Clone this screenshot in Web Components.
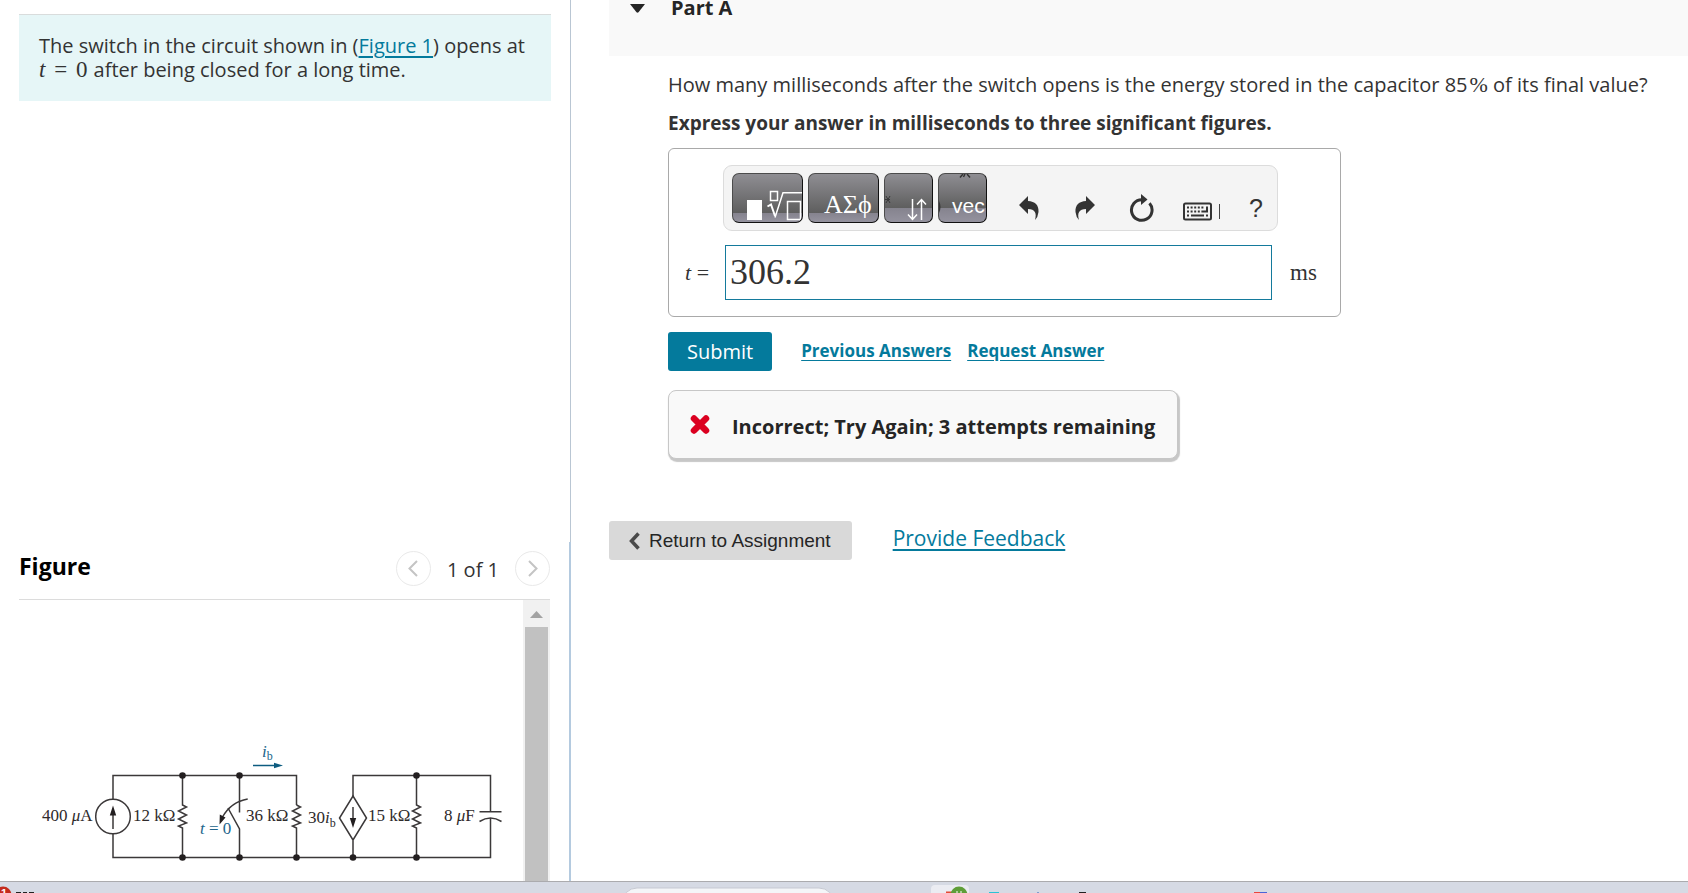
<!DOCTYPE html>
<html lang="en">
<head>
<meta charset="utf-8">
<title>Part A</title>
<style>
  body {
    margin: 0;
    background: #fff;
    color: #333;
    font: 20px/24px "Open Sans", "Noto Sans", sans-serif;
    --link: #047a9c;
    --ink: #252525;
    --math: "Liberation Serif", serif;
  }
</style>
</head>
<body>
<app-shell>
  <problem-card slot="problem">The switch in the circuit shown in (<a href="#figure">Figure 1</a>) opens at <math-text><i>t</i> <b>=</b> 0</math-text> after being closed for a long time.</problem-card>
  <figure-panel slot="figure" id="figure"><circuit-diagram></circuit-diagram></figure-panel>
  <part-header slot="main">Part A</part-header>
  <question-part slot="main">
    <p slot="prompt">How many milliseconds after the switch opens is the energy stored in the capacitor 85<percent-sign></percent-sign> of its final value?</p>
    <span slot="hint">Express your answer in milliseconds to three significant figures.</span>
    <answer-editor slot="answer" value="306.2"></answer-editor>
    <result-box slot="result">Incorrect; Try Again; 3 attempts remaining</result-box>
  </question-part>
  <page-links slot="main"></page-links>
  <task-bar slot="taskbar"></task-bar>
</app-shell>

<script>
const define = (name, html, setup) => {
  const template = document.createElement('template');
  template.innerHTML = html.trim();
  customElements.define(name, class extends HTMLElement {
    constructor() {
      super();
      this.attachShadow({ mode: 'open' }).append(template.content.cloneNode(true));
    }
    connectedCallback() { if (setup) setup(this, this.shadowRoot); }
  });
};

define('app-shell', `
<style>
  :host { display: grid; grid-template: minmax(0, 1fr) 12px / minmax(420px, 571px) minmax(0, 1fr); height: 100vh; overflow: hidden; }
  .side { display: flex; flex-direction: column; min-height: 0; }
  .top { flex: 1; box-sizing: border-box; padding: 14px 19px 0; border-right: 1px solid #b9c6d3; }
  main { padding-left: 38px; min-height: 0; overflow: hidden; }
  .bar { grid-column: 1 / -1; }
</style>
<div class="side"><div class="top"><slot name="problem"></slot></div><slot name="figure"></slot></div>
<main><slot name="main"></slot></main>
<div class="bar"><slot name="taskbar"></slot></div>`);

define('problem-card', `
<style>
  :host { display: block; padding: 19px 20px; background: #e6f6f7; border-top: 1px solid #d9dcdc; }
  ::slotted(a) { color: var(--link); text-decoration: underline; text-underline-offset: 3px; }
</style>
<slot></slot>`);

define('math-text', `
<style>
  :host { font: 23px/20px var(--math); margin-right: 1px; }
  ::slotted(b) { font-weight: 400; margin: 0 3px; }
</style><slot></slot>`);

define('percent-sign', `
<style>:host { font: 22px/20px var(--math); padding-left: 2px; }</style>%`);

define('figure-panel', `
<style>
  :host { display: flex; flex-direction: column; flex: 0 0 339px; box-sizing: border-box; padding: 0 19px; border-right: 2px solid #b4cadf; }
  header { display: flex; align-items: center; justify-content: space-between; box-sizing: border-box; height: 58px; padding-bottom: 5px; border-bottom: 1px solid #dcdcdc; }
  h2 { margin: 0; padding-bottom: 4px; font-size: 23px; line-height: 32px; color: #000; }
  nav { display: flex; align-items: center; gap: 16px; }
  button { width: 35px; height: 35px; padding: 0; border: 1px solid #e9e9e9; border-radius: 50%; background: #fff; display: grid; place-items: center; }
  nav span { padding-top: 3px; }
  .view { flex: 1; min-height: 0; display: flex; justify-content: space-between; overflow: hidden; }
  .track { flex: 0 0 27px; box-sizing: border-box; background: #f1f1f1; padding: 11px 2px 0; display: flex; flex-direction: column; align-items: center; gap: 9px; }
  .thumb { flex: 1; align-self: stretch; background: #c1c1c1; }
</style>
<header>
  <h2>Figure</h2>
  <nav aria-label="Figure pages">
    <button type="button" aria-label="Previous figure"><svg width="10" height="17" fill="none" stroke="#c4c4c4" stroke-width="2"><path d="M9 1 1.500 8.500 9 16"/></svg></button>
    <span>1 of 1</span>
    <button type="button" aria-label="Next figure"><svg width="10" height="17" fill="none" stroke="#c4c4c4" stroke-width="2"><path d="M1 1 8.500 8.500 1 16"/></svg></button>
  </nav>
</header>
<div class="view">
  <slot></slot>
  <div class="track" aria-hidden="true">
    <svg width="13" height="7"><path d="M0 7 6.500 0 13 7z" fill="#a3a3a3"/></svg>
    <div class="thumb"></div>
  </div>
</div>`);

define('circuit-diagram', `
<style>
  :host { display: block; }
  svg { display: block; }
  text { font: 17px "Liberation Serif", serif; fill: #2e2a2b; white-space: pre; }
  .i { font-style: italic; }
  .sub { font-size: 12px; }
  .blue { fill: #22658c; }
</style>
<svg width="504" height="281" role="img" aria-label="Circuit diagram">
  <g fill="none" stroke="#3b3839" stroke-width="1.500">
    <path d="M94 199V175.500H277.500V205M94 234V257.500H471.500V218M334 196V175.500H471.500V212"/>
    <circle cx="94" cy="216.500" r="17.300"/>
    <path d="M334 196 347.500 218 334 240 320.500 218zM334 240V257.500"/>
    <path d="M163.500 175.500V205l4 2-8 4 8 4-8 4 8 4-8 3 4 2V257.500"/>
    <path d="M277.500 205l4 2-8 4 8 4-8 4 8 4-8 3 4 2V257.500"/>
    <path d="M397.500 175.500V205l4 2-8 4 8 4-8 4 8 4-8 3 4 2V257.500"/>
    <path d="M220.500 175.500V212.500M220.500 257.500V229L209 208"/>
    <path d="M228.700 199Q212 202 203.500 217"/>
    <path d="M460.500 211.700H482.500M460.500 221.500Q471.500 214.500 482.500 221.500"/>
    <path d="M94 229V210M334 207V222"/>
  </g>
  <g fill="#231f20">
    <path d="M94 205.500 97.200 215.500H90.800zM334 228 330.800 218H337.200zM200.500 224.500 200.800 214.500 206.500 217.500z"/>
    <circle cx="163.500" cy="175.500" r="3.300"/><circle cx="220.500" cy="175.500" r="3.300"/><circle cx="397.500" cy="175.500" r="3.300"/>
    <circle cx="163.500" cy="257.500" r="3.300"/><circle cx="220.500" cy="257.500" r="3.300"/><circle cx="277.500" cy="257.500" r="3.300"/>
    <circle cx="334" cy="257.500" r="3.300"/><circle cx="397.500" cy="257.500" r="3.300"/>
  </g>
  <path d="M234 165.500H256" stroke="#0d5c80" stroke-width="1.500"/><path d="M255 162.800 264 165.500 255 168.200z" fill="#0d5c80"/>
  <text x="23" y="221">400 <tspan class="i">μ</tspan>A</text>
  <text x="114" y="221">12 kΩ</text>
  <text x="227" y="221">36 kΩ</text>
  <text x="289" y="223">30<tspan class="i">i</tspan><tspan class="sub" dy="4">b</tspan></text>
  <text x="349" y="221">15 kΩ</text>
  <text x="425" y="221">8 <tspan class="i">μ</tspan>F</text>
  <text x="181" y="234" class="blue"><tspan class="i">t</tspan> = 0</text>
  <text x="243" y="157" class="blue"><tspan class="i">i</tspan><tspan class="sub" dy="3">b</tspan></text>
</svg>`);

define('part-header', `
<style>
  :host { display: block; margin-top: -4px; background: #f9f9f9; padding: 0 21px 36px; }
  h1 { display: flex; align-items: center; gap: 26px; margin: 0; font-size: 20px; line-height: 24px; color: var(--ink); }
</style>
<h1><svg width="15" height="9" aria-hidden="true"><path d="M0 0H15L8.500 8.300Q7.500 9 6.500 8.300z" fill="#252525"/></svg><slot></slot></h1>`);

define('question-part', `
<style>
  :host { display: block; padding: 17px 16px 0 59px; }
  ::slotted(p) { margin: 0 0 14px; }
  .hint { margin: 0 0 13px; font-size: 19px; font-weight: 700; }
  .row { display: flex; align-items: flex-start; margin: 15px 0 19px; }
  button { height: 39px; padding: 0 19px; border: 0; border-radius: 3px; background: #047a9c; color: #fff; font: inherit; }
  a { padding-top: 7px; font-size: 17px; font-weight: 700; color: var(--link); text-underline-offset: 3px; }
  .prev { margin: 0 16px 0 29px; }
</style>
<slot name="prompt"></slot>
<p class="hint"><slot name="hint"></slot></p>
<slot name="answer"></slot>
<div class="row">
  <button type="submit">Submit</button>
  <a class="prev" href="#previous">Previous Answers</a>
  <a href="#request">Request Answer</a>
</div>
<slot name="result"></slot>`);

define('answer-editor', `
<style>
  :host { display: grid; grid-template-columns: 54px minmax(0, 1fr) 62px; row-gap: 14px; align-items: center; box-sizing: border-box; max-width: 673px; padding: 16px 0; border: 1px solid #a9a9a9; border-radius: 6px; }
  editor-toolbar { grid-column: 2; }
  label { grid-column: 1; padding-left: 16px; font: 22px/24px var(--math); }
  input { height: 55px; min-width: 0; box-sizing: border-box; margin: 0 6px 0 2px; padding: 0 4px 2px; border: 1px solid #147a9c; border-radius: 0; background: #fff; color: #333; font: 36px var(--math); }
  .unit { padding-left: 12px; font: 23px/24px var(--math); }
</style>
<editor-toolbar></editor-toolbar>
<label for="value"><i>t</i> =</label>
<input id="value" type="text">
<span class="unit">ms</span>`, (host, root) => {
  root.querySelector('input').value = host.getAttribute('value') || '';
});

define('editor-toolbar', `
<style>
  :host { display: flex; align-items: flex-start; box-sizing: border-box; height: 66px; padding: 7px 0 0 8px; border: 1px solid #dcdcdc; border-radius: 9px; background: #f4f4f4; }
  button { padding: 0; border: 0; background: none; color: #333; font: inherit; }
  .keys { display: flex; gap: 5px; }
  .key { box-sizing: border-box; width: 71px; height: 50px; border: 1px solid; border-color: #4c4c4c #111 #111 #4c4c4c; border-radius: 7px; overflow: hidden; background: linear-gradient(#8f8e93, #5e5e5e 39px, #85838e 39px, #94929e); color: #fff; }
  .key.small { width: 49px; background: linear-gradient(#8f8e93, #5e5e5e 34px, #85838e 34px, #94929e); }
  svg { display: block; }
  .greek { font: 26px "Liberation Serif", serif; fill: #fff; }
  .vec { font: 21px "Liberation Sans", sans-serif; fill: #fff; }
  .tools { display: flex; gap: 28px; align-items: center; padding: 21px 0 0 28px; }
  .tools button { flex: none; display: flex; justify-content: center; min-width: 28px; }
  .tools .help { min-width: 14px; font: 25px/28px "Liberation Sans", sans-serif; }
  .tools .kbd { align-items: center; gap: 7px; padding-top: 6px; }
</style>
<div class="keys">
  <button class="key" type="button" aria-label="Templates"><svg width="69" height="48" fill="none" stroke="#fff"><path d="M14 26h15v20H14z" fill="#fff" stroke="none"/><path d="M37.500 17.500h7v9h-7z" stroke-width="1.500"/><path d="M34.500 32.500 38 30.500 42 42" stroke-width="2"/><path d="M42 43.500 50 18.700H69" stroke-width="1.500"/><path d="M54.500 27.500h13v18h-13z" stroke-width="1.500"/></svg></button>
  <button class="key" type="button" aria-label="Symbols"><svg width="69" height="48"><text class="greek" x="15" y="39">ΑΣϕ</text></svg></button>
  <button class="key small" type="button" aria-label="Subscripts and superscripts"><svg width="47" height="48" fill="none" stroke="#fff" stroke-width="1.500"><path d="M27.500 25V45M23 40.500 27.500 45.500 32 40.500M36.500 46V26M32 30.500 36.500 25.500 41 30.500"/><path d="M1 22 5 29M5 22 1 29M0 25.500H5" stroke="#38383a" stroke-width="1"/></svg></button>
  <button class="key small" type="button" aria-label="Vectors"><svg width="47" height="48"><path d="M21 3.500 24 0M26 0 24.500 3M28 0 31 3.500" fill="none" stroke="#333" stroke-width="1.500"/><path d="M0 27Q3 33 0 39z" fill="#333"/><text class="vec" x="13" y="39">vec</text></svg></button>
</div>
<div class="tools">
  <button type="button" aria-label="Undo"><svg width="20" height="24" fill="#333"><path d="M0 9 9 0V5C16 5.500 20 9 19.500 16Q19 21 16 24C18 17 16 13 9 13V18z"/></svg></button>
  <button type="button" aria-label="Redo"><svg width="20" height="24" fill="#333"><path d="M20 9 11 0V5C4 5.500 0 9 .5 16Q1 21 4 24C2 17 4 13 11 13V18z"/></svg></button>
  <button type="button" aria-label="Reset"><svg width="25" height="28"><path d="M20.500 9.200A10.300 10.300 0 1 1 13 5.700" fill="none" stroke="#333" stroke-width="3"/><path d="M12 0 18.500 5.500 12 11z" fill="#333"/></svg></button>
  <button class="kbd" type="button" aria-label="Keyboard shortcuts"><svg width="29" height="19"><rect x="1" y="1.500" width="27" height="16" rx="1.500" fill="none" stroke="#333" stroke-width="2"/><path d="M4 5.500H21M4 9.500H20M4 13.500H6M23 13.500H25" stroke="#333" stroke-width="2" stroke-dasharray="2 1.600"/><path d="M8 13.500H21M20 9.500H24V4.500" fill="none" stroke="#333" stroke-width="2"/></svg><svg width="2" height="15"><path d="M.5 0V15" stroke="#444"/></svg></button>
  <button class="help" type="button" aria-label="Help">?</button>
</div>`);

define('result-box', `
<style>
  :host { display: flex; align-items: flex-start; gap: 22px; box-sizing: border-box; width: fit-content; padding: 24px 22px 19px 21px; border: 1px solid #c7c7c7; border-radius: 8px; background: #f9f9f9; box-shadow: 1px 2px 1px 1px #c7c7c7; font-weight: 700; color: var(--ink); }
  svg { flex: none; }
</style>
<svg width="20" height="19" aria-hidden="true"><path d="M4 3.500 16 15.500M16 3.500 4 15.500" stroke="#db0020" stroke-width="6.500"  stroke-linecap="round"/></svg>
<span><slot></slot></span>`);

define('page-links', `
<style>
  :host { display: flex; align-items: flex-start; gap: 41px; padding-top: 62px; }
  button { display: flex; align-items: center; gap: 9px; height: 39px; padding: 0 21px 0 20px; border: 0; border-radius: 3px; background: #d9d9d9; color: var(--ink); font: 19px "Liberation Sans", sans-serif; }
  a { padding-top: 5px; font-size: 21px; color: var(--link); text-decoration-thickness: 2px; text-underline-offset: 3px; }
</style>
<button type="button"><svg width="11" height="18" aria-hidden="true"><path d="M9.500 1.500 2.500 9 9.500 16.500" fill="none" stroke="#4a4a4a" stroke-width="3.500"/></svg>Return to Assignment</button>
<a href="#feedback">Provide Feedback</a>`);

define('task-bar', `
<style>
  :host { display: block; height: 12px; box-sizing: border-box; border-top: 1px solid #ababae; background: #d6dae4; overflow: hidden; }
  svg { display: block; }
  text { font: 700 11px "Liberation Sans", sans-serif; fill: #fff; }
</style>
<svg width="100%" height="11" aria-hidden="true">
  <circle cx="3" cy="13" r="8.500" fill="#c42b1c"/><text x="1" y="15">1</text>
  <path d="M16 10.500h5M23 10.500h4M29 10.500h5" stroke="#222"/>
  <rect x="622" y="6" width="212" height="30" rx="15" fill="#f4f5f8" stroke="#c6c9d2"/>
  <rect x="931" y="3" width="38" height="30" rx="4" fill="#ebecf2"/>
  <path d="M946 10.500h8" stroke="#e34a34" stroke-width="2"/>
  <circle cx="959" cy="13" r="8.500" fill="#5f9e38"/><path d="M957 9v2M961 9v2" stroke="#fff"/>
  <path d="M989 10.500h10" stroke="#2cc3d5"/><path d="M1037 10.500h2" stroke="#7f9bd0"/>
  <path d="M1079 10.500h7" stroke="#222"/>
  <path d="M1254 10.500h6" stroke="#e8453c"/><path d="M1260 10.500h7" stroke="#4a63d8"/>
</svg>`);
</script>
</body>
</html>
